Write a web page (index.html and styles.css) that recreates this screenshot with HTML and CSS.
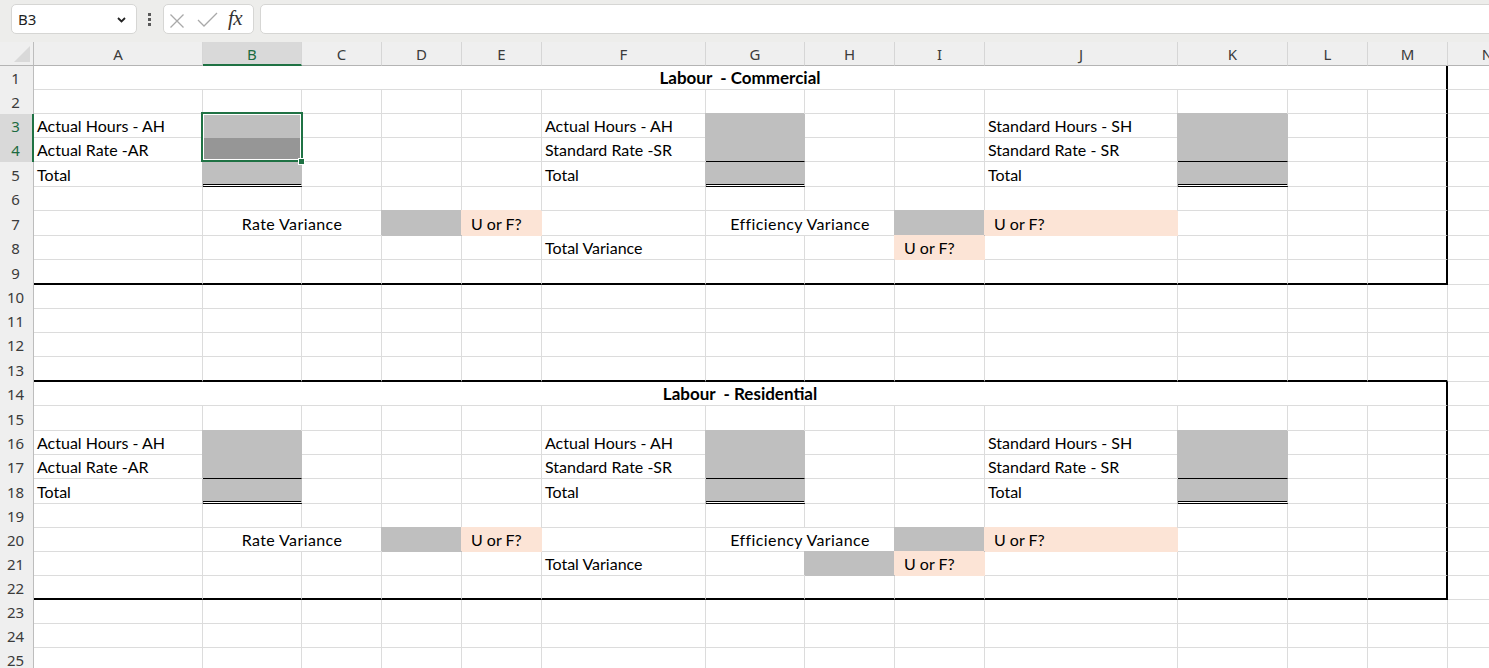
FILE: index.html
```html
<!DOCTYPE html>
<html lang="en">
<head>
<meta charset="utf-8">
<title>Labour Variance</title>
<link rel="stylesheet" href="styles.css">
</head>
<body>
<div class="toolbar">
  <div class="namebox"><span>B3</span><svg class="chev" width="9" height="6" viewBox="0 0 9 6"><polyline points="1,1 4.5,4.5 8,1" fill="none" stroke="#222" stroke-width="1.8"/></svg></div>
  <div class="grip"><i></i><i></i><i></i></div>
  <div class="fxbox"><svg width="60" height="28" viewBox="0 0 60 28"><path d="M6.5 9.5 L19.5 22.5 M19.5 9.5 L6.5 22.5" stroke="#a9a9a9" stroke-width="1.3" fill="none"/><polyline points="34,15 40,21 53,8" fill="none" stroke="#a9a9a9" stroke-width="1.3"/></svg><span class="fx">fx</span></div>
  <div class="formula"></div>
</div>
<div class="sheet">
  <div class="row hdr">
    <div class="corner"><svg width="16" height="16" viewBox="0 0 16 16"><polygon points="0,16 16,0 16,16" fill="#d9d9d9"/></svg></div>
    <div class="hc">A</div><div class="hc hsel">B</div><div class="hc">C</div><div class="hc">D</div><div class="hc">E</div><div class="hc">F</div><div class="hc">G</div><div class="hc">H</div><div class="hc">I</div><div class="hc">J</div><div class="hc">K</div><div class="hc">L</div><div class="hc">M</div><div class="hc">N</div>
  </div>
  <!-- 1 -->
  <div class="row"><div class="h">1</div><div class="c s13 br ctr b">Labour  - Commercial</div><div class="c"></div></div>
  <!-- 2 -->
  <div class="row"><div class="h">2</div><div class="c"></div><div class="c"></div><div class="c"></div><div class="c"></div><div class="c"></div><div class="c"></div><div class="c"></div><div class="c"></div><div class="c"></div><div class="c"></div><div class="c"></div><div class="c"></div><div class="c br"></div><div class="c"></div></div>
  <!-- 3 -->
  <div class="row"><div class="h hs">3</div><div class="c">Actual Hours - AH</div><div class="c g active"><div class="selbox"><div class="handle"></div></div></div><div class="c"></div><div class="c"></div><div class="c"></div><div class="c">Actual Hours - AH</div><div class="c g"></div><div class="c"></div><div class="c"></div><div class="c">Standard Hours - SH</div><div class="c g"></div><div class="c"></div><div class="c br"></div><div class="c"></div></div>
  <!-- 4 -->
  <div class="row"><div class="h hs">4</div><div class="c">Actual Rate -AR</div><div class="c g ul dk"></div><div class="c"></div><div class="c"></div><div class="c"></div><div class="c">Standard Rate -SR</div><div class="c g ul"></div><div class="c"></div><div class="c"></div><div class="c">Standard Rate - SR</div><div class="c g ul"></div><div class="c"></div><div class="c br"></div><div class="c"></div></div>
  <!-- 5 -->
  <div class="row t"><div class="h">5</div><div class="c">Total</div><div class="c gl dbl"></div><div class="c"></div><div class="c"></div><div class="c"></div><div class="c">Total</div><div class="c gl dbl"></div><div class="c"></div><div class="c"></div><div class="c">Total</div><div class="c gl dbl"></div><div class="c"></div><div class="c br"></div><div class="c"></div></div>
  <!-- 6 -->
  <div class="row"><div class="h">6</div><div class="c"></div><div class="c"></div><div class="c"></div><div class="c"></div><div class="c"></div><div class="c"></div><div class="c"></div><div class="c"></div><div class="c"></div><div class="c"></div><div class="c"></div><div class="c"></div><div class="c br"></div><div class="c"></div></div>
  <!-- 7 -->
  <div class="row t"><div class="h">7</div><div class="c"></div><div class="c s2 ctr wide">Rate Variance</div><div class="c g"></div><div class="c p ind">U or F?</div><div class="c"></div><div class="c s2 ctr wide">Efficiency Variance</div><div class="c g"></div><div class="c p ind">U or F?</div><div class="c"></div><div class="c"></div><div class="c br"></div><div class="c"></div></div>
  <!-- 8 -->
  <div class="row"><div class="h">8</div><div class="c"></div><div class="c"></div><div class="c"></div><div class="c"></div><div class="c"></div><div class="c">Total Variance</div><div class="c"></div><div class="c"></div><div class="c p ind">U or F?</div><div class="c"></div><div class="c"></div><div class="c"></div><div class="c br"></div><div class="c"></div></div>
  <!-- 9 -->
  <div class="row t"><div class="h">9</div><div class="c bb"></div><div class="c bb"></div><div class="c bb"></div><div class="c bb"></div><div class="c bb"></div><div class="c bb"></div><div class="c bb"></div><div class="c bb"></div><div class="c bb"></div><div class="c bb"></div><div class="c bb"></div><div class="c bb"></div><div class="c bb br"></div><div class="c"></div></div>
  <!-- 10 -->
  <div class="row"><div class="h">10</div><div class="c"></div><div class="c"></div><div class="c"></div><div class="c"></div><div class="c"></div><div class="c"></div><div class="c"></div><div class="c"></div><div class="c"></div><div class="c"></div><div class="c"></div><div class="c"></div><div class="c"></div><div class="c"></div></div>
  <!-- 11 -->
  <div class="row"><div class="h">11</div><div class="c"></div><div class="c"></div><div class="c"></div><div class="c"></div><div class="c"></div><div class="c"></div><div class="c"></div><div class="c"></div><div class="c"></div><div class="c"></div><div class="c"></div><div class="c"></div><div class="c"></div><div class="c"></div></div>
  <!-- 12 -->
  <div class="row"><div class="h">12</div><div class="c"></div><div class="c"></div><div class="c"></div><div class="c"></div><div class="c"></div><div class="c"></div><div class="c"></div><div class="c"></div><div class="c"></div><div class="c"></div><div class="c"></div><div class="c"></div><div class="c"></div><div class="c"></div></div>
  <!-- 13 -->
  <div class="row t"><div class="h">13</div><div class="c bb"></div><div class="c bb"></div><div class="c bb"></div><div class="c bb"></div><div class="c bb"></div><div class="c bb"></div><div class="c bb"></div><div class="c bb"></div><div class="c bb"></div><div class="c bb"></div><div class="c bb"></div><div class="c bb"></div><div class="c bb"></div><div class="c"></div></div>
  <!-- 14 -->
  <div class="row"><div class="h">14</div><div class="c s13 br ctr b">Labour  - Residential</div><div class="c"></div></div>
  <!-- 15 -->
  <div class="row t"><div class="h">15</div><div class="c"></div><div class="c"></div><div class="c"></div><div class="c"></div><div class="c"></div><div class="c"></div><div class="c"></div><div class="c"></div><div class="c"></div><div class="c"></div><div class="c"></div><div class="c"></div><div class="c br"></div><div class="c"></div></div>
  <!-- 16 -->
  <div class="row"><div class="h">16</div><div class="c">Actual Hours - AH</div><div class="c g"></div><div class="c"></div><div class="c"></div><div class="c"></div><div class="c">Actual Hours - AH</div><div class="c g"></div><div class="c"></div><div class="c"></div><div class="c">Standard Hours - SH</div><div class="c g"></div><div class="c"></div><div class="c br"></div><div class="c"></div></div>
  <!-- 17 -->
  <div class="row"><div class="h">17</div><div class="c">Actual Rate -AR</div><div class="c g ul"></div><div class="c"></div><div class="c"></div><div class="c"></div><div class="c">Standard Rate -SR</div><div class="c g ul"></div><div class="c"></div><div class="c"></div><div class="c">Standard Rate - SR</div><div class="c g ul"></div><div class="c"></div><div class="c br"></div><div class="c"></div></div>
  <!-- 18 -->
  <div class="row t"><div class="h">18</div><div class="c">Total</div><div class="c gl dbl"></div><div class="c"></div><div class="c"></div><div class="c"></div><div class="c">Total</div><div class="c gl dbl"></div><div class="c"></div><div class="c"></div><div class="c">Total</div><div class="c gl dbl"></div><div class="c"></div><div class="c br"></div><div class="c"></div></div>
  <!-- 19 -->
  <div class="row"><div class="h">19</div><div class="c"></div><div class="c"></div><div class="c"></div><div class="c"></div><div class="c"></div><div class="c"></div><div class="c"></div><div class="c"></div><div class="c"></div><div class="c"></div><div class="c"></div><div class="c"></div><div class="c br"></div><div class="c"></div></div>
  <!-- 20 -->
  <div class="row"><div class="h">20</div><div class="c"></div><div class="c s2 ctr wide">Rate Variance</div><div class="c g"></div><div class="c p ind">U or F?</div><div class="c"></div><div class="c s2 ctr wide">Efficiency Variance</div><div class="c g"></div><div class="c p ind">U or F?</div><div class="c"></div><div class="c"></div><div class="c br"></div><div class="c"></div></div>
  <!-- 21 -->
  <div class="row"><div class="h">21</div><div class="c"></div><div class="c"></div><div class="c"></div><div class="c"></div><div class="c"></div><div class="c">Total Variance</div><div class="c"></div><div class="c g"></div><div class="c p ind">U or F?</div><div class="c"></div><div class="c"></div><div class="c"></div><div class="c br"></div><div class="c"></div></div>
  <!-- 22 -->
  <div class="row"><div class="h">22</div><div class="c bb"></div><div class="c bb"></div><div class="c bb"></div><div class="c bb"></div><div class="c bb"></div><div class="c bb"></div><div class="c bb"></div><div class="c bb"></div><div class="c bb"></div><div class="c bb"></div><div class="c bb"></div><div class="c bb"></div><div class="c bb br"></div><div class="c"></div></div>
  <!-- 23 -->
  <div class="row"><div class="h">23</div><div class="c"></div><div class="c"></div><div class="c"></div><div class="c"></div><div class="c"></div><div class="c"></div><div class="c"></div><div class="c"></div><div class="c"></div><div class="c"></div><div class="c"></div><div class="c"></div><div class="c"></div><div class="c"></div></div>
  <!-- 24 -->
  <div class="row"><div class="h">24</div><div class="c"></div><div class="c"></div><div class="c"></div><div class="c"></div><div class="c"></div><div class="c"></div><div class="c"></div><div class="c"></div><div class="c"></div><div class="c"></div><div class="c"></div><div class="c"></div><div class="c"></div><div class="c"></div></div>
  <!-- 25 -->
  <div class="row"><div class="h">25</div><div class="c"></div><div class="c"></div><div class="c"></div><div class="c"></div><div class="c"></div><div class="c"></div><div class="c"></div><div class="c"></div><div class="c"></div><div class="c"></div><div class="c"></div><div class="c"></div><div class="c"></div><div class="c"></div></div>
</div>
</body>
</html>
```
FILE: styles.css
```css
* { box-sizing: border-box; }
html, body {
  margin: 0;
  padding: 0;
  width: 1489px;
  height: 668px;
  overflow: hidden;
  background: #ffffff;
}
body { font-family: "Lato", "Liberation Sans", sans-serif; color: #000; }

/* ---------- toolbar ---------- */
.toolbar {
  height: 42px;
  background: #ededeb;
  display: flex;
  align-items: flex-start;
  padding: 4px 0 0 11px;
  overflow: hidden;
}
.namebox {
  width: 126px;
  height: 30px;
  background: #fff;
  border: 1px solid #d6d6d4;
  border-radius: 5px;
  display: flex;
  align-items: center;
  justify-content: space-between;
  padding: 0 10px 0 6px;
  font-family: "Noto Sans", sans-serif;
  font-size: 15px;
  color: #1f1f1f;
}
.namebox span { margin-top: -1px; }
.chev { display: block; margin-top: 2px; }
.grip {
  width: 26px;
  height: 30px;
  padding: 9px 0 0 11px;
  display: flex;
  flex-direction: column;
  gap: 2px;
}
.grip i { display: block; width: 3px; height: 3px; background: #5a5a5a; }
.fxbox {
  width: 91px;
  height: 30px;
  background: #fff;
  border: 1px solid #d6d6d4;
  border-radius: 5px;
  display: flex;
  align-items: center;
}
.fxbox svg { display: block; }
.fx {
  font-family: "Liberation Serif", serif;
  font-style: italic;
  font-size: 21px;
  color: #333;
  margin-left: 4px;
  margin-top: -2px;
  letter-spacing: -0.5px;
}
.formula {
  flex: 1;
  height: 30px;
  margin-left: 6px;
  margin-right: -20px;
  background: #fff;
  border: 1px solid #d6d6d4;
  border-radius: 5px;
}

/* ---------- sheet ---------- */
.sheet { overflow: hidden; width: 1489px; }
.row {
  display: grid;
  grid-template-columns: 34px 169px 99px 80px 80px 80px 164px 99px 90px 90px 193px 110px 80px 80px 80px;
  height: 24px;
}
.row.t { height: 25px; }

.hdr { height: 24px; }
.corner {
  background: #efefef;
  border-right: 1px solid #bdbdbd;
  border-bottom: 1px solid #b4b4b4;
  display: flex;
  align-items: flex-end;
  justify-content: flex-end;
  padding: 0 3px 3px 0;
}
.corner svg { display: block; }
.hc {
  background: #efefef;
  border-right: 1px solid #d6d6d6;
  border-bottom: 1px solid #b4b4b4;
  display: flex;
  align-items: center;
  justify-content: center;
  font-family: "Noto Sans", sans-serif;
  font-size: 15px;
  color: #3b3b3b;
  padding-top: 1px;
}
.hc.hsel {
  background: #d9d9d9;
  color: #1d6b41;
  border-bottom: 2px solid #1f7244;
  padding-top: 2px;
}
.h {
  background: #efefef;
  border-right: 1px solid #bdbdbd;
  display: flex;
  align-items: center;
  justify-content: center;
  font-family: "Noto Sans", sans-serif;
  font-size: 15px;
  color: #3b3b3b;
  padding-right: 2px;
}
.h.hs {
  background: #d9d9d9;
  color: #1d6b41;
  border-right: 2px solid #1f7244;
  padding-right: 1px;
}

.c {
  border-right: 1px solid #dcdcdc;
  border-bottom: 1px solid #dcdcdc;
  display: flex;
  align-items: flex-end;
  padding: 0 2px 3px 3px;
  white-space: pre;
  font-size: 16px;
  line-height: 1;
  min-width: 0;
}
.s2 { grid-column: span 2; }
.s13 { grid-column: span 13; }
.ctr { justify-content: center; padding-left: 0; padding-right: 0; }
.b { font-weight: bold; font-size: 17px; }
.wide { letter-spacing: 0.4px; }
.ind { padding-left: 9px; }

.g { background: #bfbfbf; border-color: #bfbfbf; box-shadow: -1px -1px 0 #bfbfbf; }
.gl { background: #bfbfbf; border-right-color: #bfbfbf; box-shadow: -1px 0 0 #bfbfbf; }
.p { background: #fce4d6; border-color: #fce4d6; box-shadow: -1px -1px 0 #fce4d6; }
.dk { background: #969696; }
.ul { border-bottom-color: #000; }
.dbl { border-bottom: 3px double #000; background-clip: padding-box; }
.bb { border-bottom: 2px solid #000; }
.br { border-right: 2px solid #000; }

.active { position: relative; }
.selbox {
  position: absolute;
  left: -2px;
  top: -2px;
  width: 102px;
  height: 50px;
  border: 2px solid #1f7244;
  box-shadow: inset 0 0 0 1px #fff;
  z-index: 3;
}
.handle {
  position: absolute;
  right: -4px;
  bottom: -5px;
  width: 7px;
  height: 7px;
  background: #1f7244;
  border: 1px solid #fff;
}
```
